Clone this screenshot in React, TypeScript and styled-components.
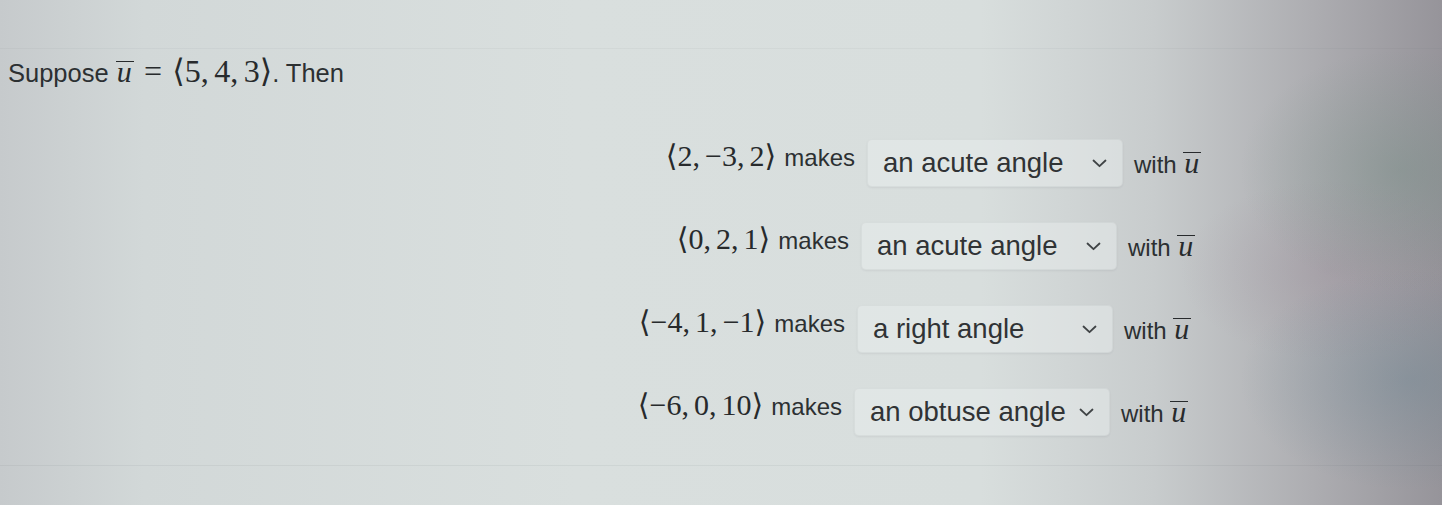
import styled, { createGlobalStyle } from "styled-components";

const Global = createGlobalStyle`
  html, body { margin: 0; padding: 0; }
  body {
    width: 1442px; height: 505px; overflow: hidden;
    font-family: "Liberation Sans", Arial, sans-serif;
    color: #2c3032;
    background:
      radial-gradient(ellipse 160px 120px at 1400px 170px, rgba(110, 140, 128, 0.35), transparent),
      radial-gradient(ellipse 170px 110px at 1410px 380px, rgba(100, 130, 145, 0.35), transparent),
      radial-gradient(ellipse 150px 90px at 1330px 270px, rgba(150, 130, 145, 0.25), transparent),
      linear-gradient(90deg, #c6cacc 0%, #d2d8d8 10%, #d9dfde 40%, #d8dedd 68%, #c8cccd 80%, #adadb1 91%, #96949a 100%);
  }
`;

const Page = styled.main`
  padding-top: 48px;
`;

const Panel = styled.section`
  height: 418px;
  border-top: 1px solid rgba(80, 90, 95, 0.05);
  border-bottom: 1px solid rgba(80, 90, 95, 0.07);
  box-sizing: border-box;
`;

const Prompt = styled.p`
  margin: 0;
  padding: 7px 0 0 8px;
  font-size: 25.5px;
  line-height: 30px;
`;

const Math = styled.span<{ $size?: number }>`
  font-family: "Liberation Serif", "DejaVu Serif", serif;
  font-size: ${({ $size }) => $size ?? 30}px;
  color: #272a2c;
`;

const Var = styled.i`
  display: inline-block;
  font-family: "Liberation Serif", "DejaVu Serif", serif;
  font-style: italic;
  border-top: 1.5px solid currentColor;
  line-height: 19px;
  margin-top: 2px;
  padding: 0 2px 0 1px;
`;

const Rel = styled.span`
  margin: 0 0.32em;
`;

const Punct = styled.span`
  margin-right: 0.17em;
`;

const Rows = styled.div`
  margin-top: 51px;
  display: flex;
  flex-direction: column;
  gap: 35px;
`;

const Row = styled.div<{ $shift: number }>`
  display: flex;
  align-items: center;
  margin-left: ${({ $shift }) => 620 + $shift}px;
  height: 48px;
`;

const Label = styled.div`
  width: 235px;
  align-self: flex-start;
  padding-top: 1px;
  text-align: right;
  white-space: nowrap;
  font-size: 24px;
  line-height: 32px;
`;

const Makes = styled.span`
  margin-left: 8px;
`;

const Select = styled.div`
  box-sizing: border-box;
  width: 256px;
  height: 48px;
  margin: 0 11px 0 12px;
  padding: 0 15px 0 15px;
  display: flex;
  align-items: center;
  justify-content: space-between;
  background: rgba(236, 240, 240, 0.45);
  border: 1px solid rgba(90, 100, 105, 0.07);
  border-radius: 5px;
  box-shadow: 0 1px 2px rgba(60, 70, 75, 0.08);
  font-size: 27.5px;
  color: #303335;
`;

const Chevron = () => (
  <svg width="15" height="9" viewBox="0 0 15 9">
    <path d="M1.5 1.5 L7.5 7.2 L13.5 1.5" fill="none" stroke="#3f4345" strokeWidth="1.8" strokeLinecap="round" strokeLinejoin="round" />
  </svg>
);

const With = styled.span`
  font-size: 24px;
  white-space: nowrap;
`;

const UBar = () => (
  <Math>
    <Var>u</Var>
  </Math>
);

function Vec({ parts, size }: { parts: string[]; size?: number }) {
  return (
    <Math $size={size}>
      ⟨
      {parts.map((p, i) => (
        <span key={i}>
          {p}
          {i < parts.length - 1 && <Punct>,</Punct>}
        </span>
      ))}
      ⟩
    </Math>
  );
}

const rows = [
  { v: ["2", "−3", "2"], answer: "an acute angle", shift: 0 },
  { v: ["0", "2", "1"], answer: "an acute angle", shift: -6 },
  { v: ["−4", "1", "−1"], answer: "a right angle", shift: -10 },
  { v: ["−6", "0", "10"], answer: "an obtuse angle", shift: -13 },
];

export default function App() {
  return (
    <>
      <Global />
      <Page>
        <Panel>
          <Prompt>
            Suppose <UBar />
            <Math $size={32}>
              <Rel>=</Rel>
            </Math>
            <Vec parts={["5", "4", "3"]} size={32} />. Then
          </Prompt>
          <Rows>
            {rows.map((r, i) => (
              <Row key={i} $shift={r.shift}>
                <Label>
                  <Vec parts={r.v} />
                  <Makes>makes</Makes>
                </Label>
                <Select>
                  <span>{r.answer}</span>
                  <Chevron />
                </Select>
                <With>
                  with <UBar />
                </With>
              </Row>
            ))}
          </Rows>
        </Panel>
      </Page>
    </>
  );
}
